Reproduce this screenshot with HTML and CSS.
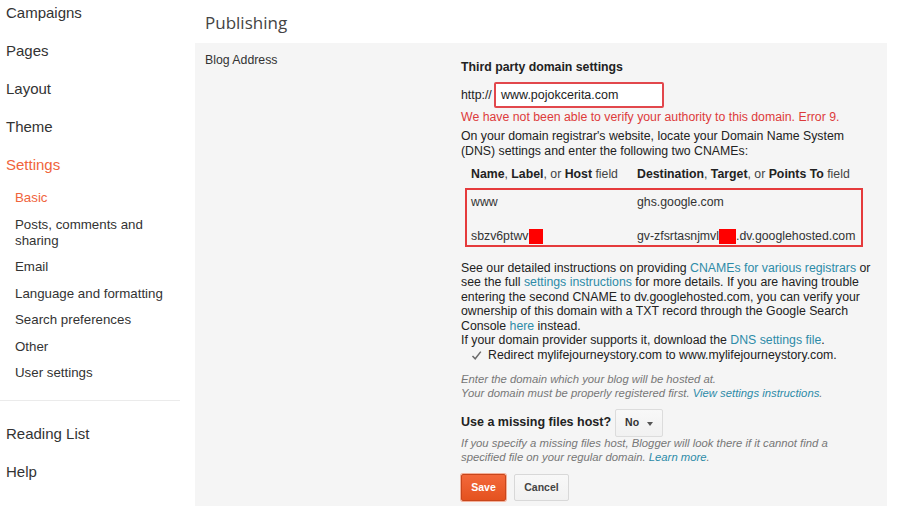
FILE: index.html
```html
<!DOCTYPE html>
<html>
<head>
<meta charset="utf-8">
<title>Publishing</title>
<link rel="stylesheet" href="styles.css">
</head>
<body>
<div class="page">
  <nav class="sidebar">
    <ul class="nav">
      <li class="nav-item">Campaigns</li>
      <li class="nav-item">Pages</li>
      <li class="nav-item">Layout</li>
      <li class="nav-item">Theme</li>
      <li class="nav-item active">Settings</li>
    </ul>
    <ul class="subnav">
      <li class="sub-item active">Basic</li>
      <li class="sub-item">Posts, comments and sharing</li>
      <li class="sub-item">Email</li>
      <li class="sub-item">Language and formatting</li>
      <li class="sub-item">Search preferences</li>
      <li class="sub-item">Other</li>
      <li class="sub-item">User settings</li>
    </ul>
    <hr class="sep">
    <ul class="nav">
      <li class="nav-item">Reading List</li>
      <li class="nav-item">Help</li>
    </ul>
  </nav>

  <main class="main">
    <h1 class="title">Publishing</h1>
    <section class="panel">
      <div class="label">Blog Address</div>
      <div class="content">
        <div class="heading">Third party domain settings</div>
        <div class="url-row">
          <span class="proto">http://</span>
          <span class="url-input">www.pojokcerita.com</span>
        </div>
        <div class="error">We have not been able to verify your authority to this domain. Error 9.</div>
        <div class="desc">On your domain registrar's website, locate your Domain Name System<br>(DNS) settings and enter the following two CNAMEs:</div>

        <div class="cname-head">
          <div class="col1"><b>Name</b>, <b>Label</b>, or <b>Host</b> field</div>
          <div class="col2"><b>Destination</b>, <b>Target</b>, or <b>Points To</b> field</div>
        </div>
        <div class="cname-box">
          <div class="cname-row">
            <div class="col1">www</div>
            <div class="col2">ghs.google.com</div>
          </div>
          <div class="cname-row second">
            <div class="col1">sbzv6ptwv<span class="redact r1"></span></div>
            <div class="col2">gv-zfsrtasnjmvl<span class="redact r2"></span>.dv.googlehosted.com</div>
          </div>
        </div>

        <p class="para">See our detailed instructions on providing <a class="link">CNAMEs for various registrars</a> or<br>see the full <a class="link">settings instructions</a> for more details. If you are having trouble<br>entering the second CNAME to dv.googlehosted.com, you can verify your<br>ownership of this domain with a TXT record through the Google Search<br>Console <a class="link">here</a> instead.<br>If your domain provider supports it, download the <a class="link">DNS settings file</a>.</p>

        <div class="check-row">
          <svg class="check" width="11" height="11" viewBox="0 0 11 11"><path d="M1.5 6 L4.2 8.8 L9.8 1.6" fill="none" stroke="#6a6a6a" stroke-width="1.5"/></svg>
          <span>Redirect mylifejourneystory.com to www.mylifejourneystory.com.</span>
        </div>

        <p class="hint hint-1">Enter the domain which your blog will be hosted at.<br>Your domain must be properly registered first. <a class="link">View settings instructions</a>.</p>

        <div class="missing-row">
          <span class="missing-label">Use a missing files host?</span>
          <span class="select">No<span class="caret"></span></span>
        </div>
        <p class="hint hint-2">If you specify a missing files host, Blogger will look there if it cannot find a<br>specified file on your regular domain. <a class="link">Learn more</a>.</p>

        <div class="buttons">
          <span class="btn btn-save">Save</span>
          <span class="btn btn-cancel">Cancel</span>
        </div>
      </div>
    </section>
  </main>
</div>
</body>
</html>
```

FILE: styles.css
```css
html, body {
  margin: 0;
  padding: 0;
  background: #ffffff;
}
body {
  font-family: "Liberation Sans", Arial, sans-serif;
  color: #222;
  width: 900px;
  height: 506px;
  overflow: hidden;
}
.page {
  display: flex;
  height: 506px;
  overflow: hidden;
}

/* Sidebar */
.sidebar {
  flex: 0 0 180px;
  margin-top: -6px;
}
.nav, .subnav {
  list-style: none;
  margin: 0;
  padding: 0;
}
.nav-item {
  height: 38px;
  line-height: 38px;
  font-size: 15px;
  padding-left: 6px;
  color: #333;
}
.subnav {
  padding-left: 15px;
}
.sub-item {
  font-size: 13.3px;
  line-height: 16px;
  padding: 5.25px 0;
  max-width: 150px;
  color: #333;
}
.sub-item:first-child {
  padding-top: 6px;
}
.nav-item.active, .sub-item.active {
  color: #f0643c;
}
.sep {
  border: 0;
  border-top: 1px solid #ebebeb;
  height: 0;
  margin: 14px 0 14px 0;
}

/* Main */
.main {
  flex: 0 0 692px;
  margin-left: 15px;
  display: flex;
  flex-direction: column;
}
.title {
  margin: 0;
  height: 43px;
  box-sizing: border-box;
  padding: 12px 0 0 10px;
  line-height: 22px;
  font-family: "Open Sans", "Liberation Sans", sans-serif;
  font-size: 17px;
  font-weight: normal;
  color: #444;
}
.panel {
  flex: 1;
  background: #f5f5f5;
  display: flex;
  padding: 10px 0 0 10px;
}
.label {
  flex: 0 0 256px;
  font-size: 12.3px;
  line-height: 15px;
  color: #333;
}
.content {
  margin-top: 7px;
  font-size: 12.3px;
  line-height: 15px;
  color: #222;
}
.heading {
  font-weight: bold;
  color: #222;
}
.url-row {
  margin-top: 7px;
  display: flex;
  align-items: center;
  height: 26px;
}
.proto {
  width: 33px;
  padding-top: 1px;
}
.url-input {
  width: 170px;
  height: 26px;
  box-sizing: border-box;
  border: 2px solid #e2474c;
  border-radius: 2px;
  background: #fff;
  padding-left: 5px;
  font-size: 12.5px;
  line-height: 23px;
  color: #222;
}
.error {
  margin-top: 1.5px;
  color: #dd3b3b;
}
.desc {
  margin-top: 4px;
}
.cname-head {
  margin-top: 8px;
  display: flex;
  padding-left: 10px;
  color: #444;
}
.cname-head b {
  color: #222;
}
.col1 {
  flex: 0 0 166px;
  white-space: nowrap;
}
.col2 {
  white-space: nowrap;
}
.cname-box {
  margin-top: 6.5px;
  margin-left: 4px;
  width: 398px;
  box-sizing: border-box;
  border: 2px solid #e53a3c;
  padding: 4.5px 0 1.5px 4px;
  color: #333;
}
.cname-row {
  display: flex;
  height: 15px;
}
.cname-row.second {
  margin-top: 19px;
}
.redact {
  display: inline-block;
  height: 15px;
  background: #ff0000;
  vertical-align: top;
}
.r1 {
  width: 14px;
  margin-left: 1px;
}
.r2 {
  width: 17px;
  margin-left: 0px;
}
.para {
  margin: 14px 0 0 0;
  line-height: 14.4px;
  white-space: nowrap;
}
.link {
  color: #2d8ba8;
  text-decoration: none;
}
.check-row {
  margin-top: 1px;
  padding-left: 10px;
  display: flex;
  align-items: center;
  height: 15px;
  white-space: nowrap;
}
.check {
  margin-right: 6px;
}
.hint {
  font-style: italic;
  font-size: 11.3px;
  line-height: 14px;
  color: #777;
  white-space: nowrap;
}
.hint-1 {
  margin: 8.5px 0 0 0;
}
.missing-row {
  margin-top: 9px;
  display: flex;
  align-items: center;
  height: 28px;
}
.missing-label {
  font-weight: bold;
  font-size: 12.5px;
  color: #222;
}
.select {
  margin-left: 4px;
  width: 48px;
  height: 28px;
  box-sizing: border-box;
  border: 1px solid #dcdcdc;
  border-radius: 2px;
  background: linear-gradient(#f8f8f8, #f1f1f1);
  display: flex;
  align-items: center;
  padding-left: 9px;
  font-size: 10.5px;
  font-weight: bold;
  color: #333;
}
.caret {
  margin-left: 8px;
  margin-top: 2px;
  width: 0;
  height: 0;
  border-left: 3.5px solid transparent;
  border-right: 3.5px solid transparent;
  border-top: 4px solid #555;
}
.hint-2 {
  margin: -1px 0 0 0;
}
.buttons {
  margin-top: 10px;
  display: flex;
  gap: 8px;
}
.btn {
  height: 27px;
  box-sizing: border-box;
  border-radius: 2px;
  font-size: 10.5px;
  font-weight: bold;
  display: flex;
  align-items: center;
  justify-content: center;
}
.btn-save {
  width: 45px;
  background: linear-gradient(#f3683a, #e4521f);
  border: 1px solid #c8461b;
  color: #fff;
  box-shadow: 0 0 0 1px #f3b09a;
}
.btn-cancel {
  width: 55px;
  background: linear-gradient(#f8f8f8, #f1f1f1);
  border: 1px solid #d8d8d8;
  color: #444;
}
```
